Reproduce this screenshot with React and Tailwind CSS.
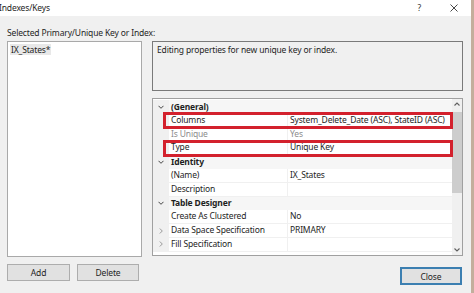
import React from 'react';

const rows = [
  { label: '(General)', cat: true },
  { label: 'Columns', value: 'System_Delete_Date (ASC), StateID (ASC)' },
  { label: 'Is Unique', value: 'Yes', muted: true },
  { label: 'Type', value: 'Unique Key' },
  { label: 'Identity', cat: true },
  { label: '(Name)', value: 'IX_States' },
  { label: 'Description', value: '' },
  { label: 'Table Designer', cat: true },
  { label: 'Create As Clustered', value: 'No' },
  { label: 'Data Space Specification', value: 'PRIMARY', collapsed: true },
  { label: 'Fill Specification', value: '', collapsed: true },
];

const Chevron = ({ down }) => (
  <svg width="6" height="6" viewBox="0 0 6 6" fill="none" stroke={down ? '#444' : '#9a9a9a'} strokeWidth="1">
    {down ? <path d="M0.5 1.8 L3 4.3 L5.5 1.8" /> : <path d="M1.8 0.5 L4.3 3 L1.8 5.5" />}
  </svg>
);

const PropertyGrid = () => (
  <div className="relative flex h-[158px] border border-[#a0a0a0] bg-white">
    <div className="flex-1 pt-[1px]">
      {rows.map((row) => (
        <div
          key={row.label}
          className={`flex h-[13.8px] items-center whitespace-nowrap ${row.cat ? 'bg-[#f6f6f6]' : 'border-b border-[#f0f0f0]'}`}
        >
          <div className="flex h-full w-[16px] shrink-0 items-center justify-center bg-[#f0f0f0]">
            {(row.cat || row.collapsed) && <Chevron down={row.cat} />}
          </div>
          {row.cat ? (
            <span className="pl-[2px] font-bold text-[#1e1e1e]">{row.label}</span>
          ) : (
            <>
              <span className={`w-[118px] shrink-0 pl-[2px] ${row.muted ? 'text-[#8d8d8d]' : 'text-[#1e1e1e]'}`}>{row.label}</span>
              <span className={`flex h-full items-center border-l border-[#f0f0f0] pl-[2px] ${row.muted ? 'text-[#8d8d8d]' : 'text-[#1e1e1e]'}`}>
                {row.value}
              </span>
            </>
          )}
        </div>
      ))}
    </div>
    <div className="flex w-[10px] flex-col items-center bg-[#f0f0f0]">
      <svg className="mt-[3px]" width="6" height="4" viewBox="0 0 6 4" fill="none" stroke="#606060" strokeWidth="1.1">
        <path d="M0.5 3.5 L3 1 L5.5 3.5" />
      </svg>
      <div className="mt-[6px] h-[81px] w-full bg-[#cdcdcd]" />
      <div className="flex-1" />
      <svg className="mb-[3px]" width="6" height="4" viewBox="0 0 6 4" fill="none" stroke="#606060" strokeWidth="1.1">
        <path d="M0.5 0.5 L3 3 L5.5 0.5" />
      </svg>
    </div>
    <div className="absolute left-[10px] top-[13px] h-[17px] w-[290px] border-[3px] border-[#d3212d]" />
    <div className="absolute left-[10px] top-[41px] h-[17px] w-[290px] border-[3px] border-[#d3212d]" />
  </div>
);

export default function App() {
  return (
    <div
      className="h-[293px] w-[474px] overflow-hidden border-r-[3px] border-[#c4ae9c] bg-[#f0f0f0] text-[8.5px] tracking-[-0.15px] text-[#1e1e1e]"
      style={{ fontFamily: '"Noto Sans", "Open Sans", sans-serif' }}
    >
      <div className="flex h-[16px] items-center bg-white">
        <span className="-ml-[1px] text-[#1e1e1e]">Indexes/Keys</span>
        <div className="flex-1" />
        <span className="mr-[29px] text-[8.5px] text-[#333]">?</span>
        <svg className="mr-[13px]" width="8" height="8" viewBox="0 0 8 8" stroke="#333" strokeWidth="0.9">
          <path d="M0.5 0.5 L7.5 7.5 M7.5 0.5 L0.5 7.5" />
        </svg>
      </div>
      <div className="pl-[7px] pt-[10px] leading-[13px]">Selected Primary/Unique Key or Index:</div>
      <div className="mt-[2px] flex pl-[7px]">
        <div className="w-[135px]">
          <div className="h-[216px] border border-[#a9a9a9] bg-white p-[2px]">
            <span className="inline-block bg-[#e8e8e8] px-[1px] leading-[11px]">IX_States*</span>
          </div>
          <div className="mt-[7px] flex gap-[7px]">
            <button className="h-[17px] w-[63px] border border-[#adadad] bg-[#e1e1e1] leading-[14px]">Add</button>
            <button className="h-[17px] w-[62px] border border-[#adadad] bg-[#e1e1e1] leading-[14px]">Delete</button>
          </div>
        </div>
        <div className="ml-[10px] w-[311px]">
          <div className="h-[50px] border border-[#7a7a7a] bg-[#f0f0f0] px-[4px] pt-[2px]">
            Editing properties for new unique key or index.
          </div>
          <div className="mt-[7px]">
            <PropertyGrid />
          </div>
          <div className="mt-[11px] flex justify-end pr-[1px]">
            <button className="h-[18px] w-[62px] border-2 border-[#3c7fb1] bg-[#e1e1e1] leading-[13px]">Close</button>
          </div>
        </div>
      </div>
    </div>
  );
}
